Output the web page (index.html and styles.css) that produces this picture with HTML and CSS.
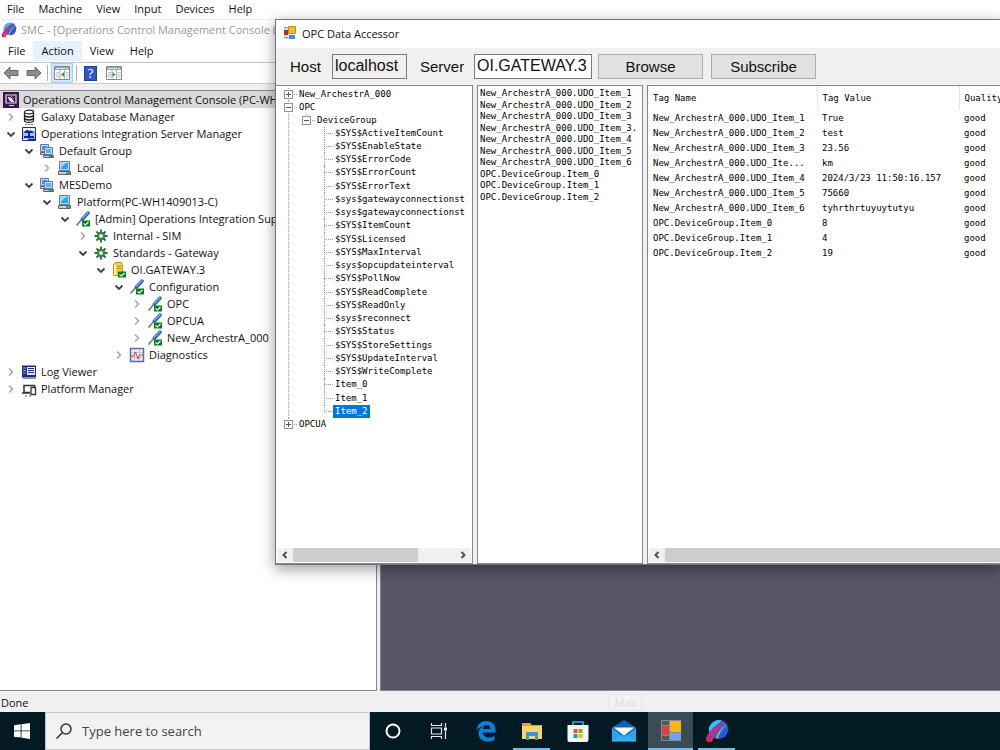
FILE: index.html
```
<!DOCTYPE html>
<html lang="en">
<head>
  <meta charset="UTF-8" />
  <meta name="viewport" content="width=device-width, initial-scale=1.0"/>
  <title>OPC Data Accessor</title>
  <link rel="stylesheet" href="styles.css">
</head>
<body>

<!-- shared icons -->
<svg class="sprite" aria-hidden="true">
  <symbol id="i-open" viewBox="0 0 16 16"><path d="M4.500 6.500 8 10l3.500-3.500" fill="none" stroke="#404040" stroke-width="1.800"/></symbol>
  <symbol id="i-closed" viewBox="0 0 16 16"><path d="M6 4.500 9.500 8 6 11.500" fill="none" stroke="#a6a6a6" stroke-width="1.500"/></symbol>
  <symbol id="i-logo" viewBox="0 0 24 24">
    <circle cx="13.500" cy="10.500" r="9.500" fill="#1f6fe0"/>
    <path d="M7 4.500a9 9 0 0 1 10-3C12 5 8 10 6 17c-3-4-3-9 1-12.500z" fill="#35c3f3"/>
    <path d="M22 2C14 5 8 11 4 22l3 1C10 14 14 7 22 2z" fill="#e32b4b"/>
    <path d="M21 1C12 4 5 10 1 19l3 3C7 12 13 5 21 1z" fill="#b42bb0"/>
    <path d="M1 18l5 5H2q-1-2-1-5z" fill="#e32b2b"/>
    <path d="M23 4c-6 4-10 9-12 16l1.500-1C14.500 13 18 8 23 4z" fill="#ffb05e"/>
    <path d="M22.500 8c-4 3-7 6-9 11.500 6-.5 10-6 9-11.500z" fill="#2a54dd"/>
  </symbol>
  <symbol id="i-console" viewBox="0 0 16 16">
    <path d="M0 0h16v16H0z" fill="#3a1450"/>
    <path d="M3 3h10v8H3zM6 13.500h5" fill="none" stroke="#e6d9ee" stroke-width="1.200"/>
    <path d="M5 5l3 1 3 4-4-1zM8 4l3 3" fill="#fff" stroke="#fff" stroke-width=".6"/>
  </symbol>
  <symbol id="i-db" viewBox="0 0 16 16">
    <path d="M3.500 3v8.500c0 2.500 9 2.500 9 0V3" fill="#fff" stroke="#222" stroke-width="1.200"/>
    <ellipse cx="8" cy="3" rx="4.500" ry="1.800" fill="#fff" stroke="#222" stroke-width="1.200"/>
    <path d="M3.500 6c0 2.500 9 2.500 9 0M3.500 9c0 2.500 9 2.500 9 0" fill="none" stroke="#222" stroke-width="1.500"/>
    <path d="M4 15.500h2M7 15.500h2M10 15.500h2" stroke="#777"/>
  </symbol>
  <symbol id="i-server" viewBox="0 0 16 16">
    <path d="M1.500 1.500h13v13h-13z" fill="#a9c1ee" stroke="#1b2a7c"/>
    <path d="M2 2h12v3H2z" fill="#e9f0ff"/>
    <path d="M3 7c1-3 4-4 5-2 2-1 4 0 5 2zM7 7h2v3H7zM3 10h10v2H3z" fill="#122a86"/>
    <path d="M2 13.500h5" stroke="#fff"/>
    <path d="M7 13.500h7" stroke="#122a86" stroke-width="1.500"/>
  </symbol>
  <symbol id="i-pc" viewBox="0 0 16 16">
    <path d="M2.500 1.500h10v9h-10z" fill="#cdd5e4" stroke="#6c7899"/>
    <path d="M4 3h7v6H4z" fill="#27a4ee"/>
    <path d="M4 3h5L4 8z" fill="#8adcff"/>
    <path d="M1.500 11.500h12v3h-12z" fill="#c9ced8" stroke="#5c6478"/>
    <path d="M9 13h4" stroke="#22a035" stroke-width="1.500"/>
  </symbol>
  <symbol id="i-group" viewBox="0 0 16 16">
    <path d="M1.500 1.500h8v7h-8z" fill="#cdd5e4" stroke="#6c7899"/>
    <path d="M3 3h5v4H3z" fill="#27a4ee"/>
    <path d="M1.500 9.500h5v2h-5z" fill="#c9ced8" stroke="#5c6478"/>
    <path d="M5.500 4.500h8v7h-8z" fill="#cdd5e4" stroke="#6c7899"/>
    <path d="M7 6h5v4H7z" fill="#43b9f5"/>
    <path d="M4.500 12.500h10v2h-10z" fill="#c9ced8" stroke="#5c6478"/>
    <path d="M10 13.500h4" stroke="#22a035" stroke-width="1.500"/>
  </symbol>
  <symbol id="i-pen" viewBox="0 0 16 16">
    <path d="M1.500 14.500 8 7" stroke="#7a7a7a" stroke-width="1.800"/>
    <path d="M7.500 8 13 2" stroke="#2a5fae" stroke-width="3.400" stroke-linecap="round"/>
    <path d="M7.500 7 12.500 1.800" stroke="#6aa6ec" stroke-width="1.800" stroke-linecap="round"/>
    <path d="M7 9.500h8v6H7z" fill="#0c7a1d"/>
    <path d="m8.500 12.500 2 1.500 3-3.200" fill="none" stroke="#fff" stroke-width="1.200"/>
  </symbol>
  <symbol id="i-gear" viewBox="0 0 16 16">
    <path d="M8 1.500v13M1.500 8h13M3.500 3.500l9 9M12.500 3.500l-9 9" stroke="#2c6633" stroke-width="1.800"/>
    <circle cx="8" cy="8" r="4.200" fill="#3d7f42"/>
    <circle cx="8" cy="8" r="2" fill="#dff0df"/>
  </symbol>
  <symbol id="i-gateway" viewBox="0 0 16 16">
    <path d="m2.500 2.500 2-2h6l1 2v11h-9z" fill="#f0cf48" stroke="#b8942a"/>
    <path d="M3 3h2v10H3z" fill="#fff3a8"/>
    <path d="M6 4.500h4M6 6.500h4" stroke="#b8901c"/>
    <path d="M7 9.500h8v6H7z" fill="#0c7a1d"/>
    <path d="m8.500 12.500 2 1.500 3-3.200" fill="none" stroke="#fff" stroke-width="1.200"/>
  </symbol>
  <symbol id="i-diag" viewBox="0 0 16 16">
    <path d="M1.500 1.500h13v13h-13z" fill="#e8edf8" stroke="#5c6aa0" stroke-width="1.500"/>
    <path d="M5.500 2v12M10.500 2v12M2 5.500h12M2 10.500h12" stroke="#b9c5e2"/>
    <path d="M2 9h3l1.500-4 2.500 7 1.500-4H14" fill="none" stroke="#e23b3b"/>
  </symbol>
  <symbol id="i-log" viewBox="0 0 16 16">
    <path d="M1 1.500h14v12H1z" fill="#1c2b86"/>
    <path d="M6 3h8v8H6z" fill="#e6ecff"/>
    <path d="M7 4.500h6M7 6.500h6M7 8.500h6" stroke="#1c2b86"/>
    <path d="M2 4h3M2 6.500h3M2 9h3" stroke="#9db4f2"/>
    <path d="M2 14.500h13" stroke="#8a93b8"/>
  </symbol>
  <symbol id="i-devices" viewBox="0 0 16 16">
    <path d="M9 11.500H3v-7h10.500v2M1 12h8" fill="none" stroke="#333" stroke-width="1.500"/>
    <path d="M10 6.500h4.500v7H10z" fill="#fff" stroke="#333" stroke-width="1.300"/>
    <path d="M4 15h2M8 15h2" stroke="#555"/>
  </symbol>
  <symbol id="i-form" viewBox="0 0 16 16">
    <path d="M2 2h5v12H2z" fill="#dcdcdc"/>
    <path d="M2 5h4v5H2z" fill="#c22a20"/>
    <path d="M6.500 1.500h7v7h-7z" fill="#f3bd27" stroke="#c78d10"/>
    <path d="M7 10h6v4H7z" fill="#4d86e8"/>
    <path d="M2 2.500h4M2 12.500h4" stroke="#999"/>
  </symbol>
  <symbol id="i-back" viewBox="0 0 16 14"><path d="m1 7 6-6v3.500h8v5H7V13z" fill="#8d8d8d" stroke="#6a6a6a"/></symbol>
  <symbol id="i-panel" viewBox="0 0 16 14">
    <path d="M.5.5h15v13H.5z" fill="#fff" stroke="#83898f"/>
    <path d="M1 1h14v3H1z" fill="#9aa1a8"/>
    <path d="M2 2.500h9M12 2.500h2" stroke="#e4e7ea"/>
    <path d="M6 4v9M10.500 4v9" stroke="#a7adb3"/>
    <path d="M2 6.500h3M2 8.500h3M2 10.500h3M11.500 6.500h3M11.500 8.500h3M11.500 10.500h3" stroke="#c0c4c8"/>
  </symbol>
</svg>

<nav class="menubar vm-menu">
  <button>File</button><button>Machine</button><button>View</button><button>Input</button><button>Devices</button><button>Help</button>
</nav>

<div class="desktop">
  <header class="smc-title">
    <svg class="icon"><use href="#i-logo"/></svg>
    <span>SMC - [Operations Control Management Console (</span>
  </header>
  <nav class="menubar smc-menu">
    <button>File</button><button class="active">Action</button><button>View</button><button>Help</button>
  </nav>

  <div class="toolbar">
    <button aria-label="Back"><svg><use href="#i-back"/></svg></button>
    <button aria-label="Forward"><svg class="flip"><use href="#i-back"/></svg></button>
    <i class="sep"></i>
    <button class="on" aria-label="Show console tree"><svg viewBox="0 0 16 14"><use href="#i-panel"/><path d="M10 6v5L7 8.500z" fill="#33a02c"/></svg></button>
    <i class="sep"></i>
    <button class="help" aria-label="Help">?</button>
    <button aria-label="Show action pane"><svg viewBox="0 0 16 14"><use href="#i-panel"/><path d="M6.500 6v5l3-2.500z" fill="#33a02c"/></svg></button>
  </div>

  <main class="workspace">
    <div class="console-tree">
      <div class="row root"><svg class="icon"><use href="#i-console"/></svg>Operations Control Management Console (PC-WH</div>
      <ul>
        <li><div class="row"><svg><use href="#i-closed"/></svg><svg><use href="#i-db"/></svg>Galaxy Database Manager</div></li>
        <li><div class="row"><svg><use href="#i-open"/></svg><svg><use href="#i-server"/></svg>Operations Integration Server Manager</div>
          <ul>
            <li><div class="row"><svg><use href="#i-open"/></svg><svg><use href="#i-group"/></svg>Default Group</div>
              <ul>
                <li><div class="row"><svg><use href="#i-closed"/></svg><svg><use href="#i-pc"/></svg>Local</div></li>
              </ul>
            </li>
            <li><div class="row"><svg><use href="#i-open"/></svg><svg><use href="#i-group"/></svg>MESDemo</div>
              <ul>
                <li><div class="row"><svg><use href="#i-open"/></svg><svg><use href="#i-pc"/></svg>Platform(PC-WH1409013-C)</div>
                  <ul>
                    <li><div class="row"><svg><use href="#i-open"/></svg><svg><use href="#i-pen"/></svg>[Admin] Operations Integration Sup</div>
                      <ul>
                        <li><div class="row"><svg><use href="#i-closed"/></svg><svg><use href="#i-gear"/></svg>Internal - SIM</div></li>
                        <li><div class="row"><svg><use href="#i-open"/></svg><svg><use href="#i-gear"/></svg>Standards - Gateway</div>
                          <ul>
                            <li><div class="row"><svg><use href="#i-open"/></svg><svg><use href="#i-gateway"/></svg>OI.GATEWAY.3</div>
                              <ul>
                                <li><div class="row"><svg><use href="#i-open"/></svg><svg><use href="#i-pen"/></svg>Configuration</div>
                                  <ul>
                                    <li><div class="row"><svg><use href="#i-closed"/></svg><svg><use href="#i-pen"/></svg>OPC</div></li>
                                    <li><div class="row"><svg><use href="#i-closed"/></svg><svg><use href="#i-pen"/></svg>OPCUA</div></li>
                                    <li><div class="row"><svg><use href="#i-closed"/></svg><svg><use href="#i-pen"/></svg>New_ArchestrA_000</div></li>
                                  </ul>
                                </li>
                                <li><div class="row"><svg><use href="#i-closed"/></svg><svg><use href="#i-diag"/></svg>Diagnostics</div></li>
                              </ul>
                            </li>
                          </ul>
                        </li>
                      </ul>
                    </li>
                  </ul>
                </li>
              </ul>
            </li>
          </ul>
        </li>
        <li><div class="row"><svg><use href="#i-closed"/></svg><svg><use href="#i-log"/></svg>Log Viewer</div></li>
        <li><div class="row"><svg><use href="#i-closed"/></svg><svg><use href="#i-devices"/></svg>Platform Manager</div></li>
      </ul>
    </div>
    <div class="detail-pane"></div>
  </main>

  <footer class="statusbar">Done<span class="tip">Mail</span></footer>
</div>

<section class="opc-window">
  <header class="opc-title"><svg class="icon"><use href="#i-form"/></svg>OPC Data Accessor</header>
  <form class="opc-bar">
    <label for="host">Host</label>
    <input id="host" class="readonly" type="text" value="localhost" readonly>
    <label for="server">Server</label>
    <input id="server" class="server" type="text" value="OI.GATEWAY.3">
    <button type="button">Browse</button>
    <button type="button">Subscribe</button>
  </form>
  <div class="panes">
    <div class="pane">
      <ul class="tag-tree">
        <li><div><i class="box plus"></i><span>New_ArchestrA_000</span></div></li>
        <li><div><i class="box"></i><span>OPC</span></div>
          <ul>
            <li><div><i class="box"></i><span>DeviceGroup</span></div>
              <ul class="leaves">
                <li><div><span>$SYS$ActiveItemCount</span></div></li>
                <li><div><span>$SYS$EnableState</span></div></li>
                <li><div><span>$SYS$ErrorCode</span></div></li>
                <li><div><span>$SYS$ErrorCount</span></div></li>
                <li><div><span>$SYS$ErrorText</span></div></li>
                <li><div><span>$sys$gatewayconnectionst</span></div></li>
                <li><div><span>$sys$gatewayconnectionst</span></div></li>
                <li><div><span>$SYS$ItemCount</span></div></li>
                <li><div><span>$SYS$Licensed</span></div></li>
                <li><div><span>$SYS$MaxInterval</span></div></li>
                <li><div><span>$sys$opcupdateinterval</span></div></li>
                <li><div><span>$SYS$PollNow</span></div></li>
                <li><div><span>$SYS$ReadComplete</span></div></li>
                <li><div><span>$SYS$ReadOnly</span></div></li>
                <li><div><span>$sys$reconnect</span></div></li>
                <li><div><span>$SYS$Status</span></div></li>
                <li><div><span>$SYS$StoreSettings</span></div></li>
                <li><div><span>$SYS$UpdateInterval</span></div></li>
                <li><div><span>$SYS$WriteComplete</span></div></li>
                <li><div><span>Item_0</span></div></li>
                <li><div><span>Item_1</span></div></li>
                <li><div><span class="selected">Item_2</span></div></li>
              </ul>
            </li>
          </ul>
        </li>
        <li><div><i class="box plus"></i><span>OPCUA</span></div></li>
      </ul>
      <div class="scrollbar">
        <button aria-label="Scroll left"><svg viewBox="0 0 8 8"><path d="M5.500 1 2.500 4l3 3" /></svg></button>
        <i class="thumb"></i>
        <button aria-label="Scroll right"><svg viewBox="0 0 8 8"><path d="m2.500 1 3 3-3 3" /></svg></button>
      </div>
    </div>

    <div class="pane">
      <ul class="tag-list">
        <li>New_ArchestrA_000.UDO_Item_1</li>
        <li>New_ArchestrA_000.UDO_Item_2</li>
        <li>New_ArchestrA_000.UDO_Item_3</li>
        <li>New_ArchestrA_000.UDO_Item_3.</li>
        <li>New_ArchestrA_000.UDO_Item_4</li>
        <li>New_ArchestrA_000.UDO_Item_5</li>
        <li>New_ArchestrA_000.UDO_Item_6</li>
        <li>OPC.DeviceGroup.Item_0</li>
        <li>OPC.DeviceGroup.Item_1</li>
        <li>OPC.DeviceGroup.Item_2</li>
      </ul>
    </div>

    <div class="pane">
      <table class="values">
        <thead>
          <tr><th class="c-name">Tag Name</th><th class="c-value">Tag Value</th><th>Quality</th></tr>
        </thead>
        <tbody>
          <tr><td>New_ArchestrA_000.UDO_Item_1</td><td>True</td><td>good</td></tr>
          <tr><td>New_ArchestrA_000.UDO_Item_2</td><td>test</td><td>good</td></tr>
          <tr><td>New_ArchestrA_000.UDO_Item_3</td><td>23.56</td><td>good</td></tr>
          <tr><td>New_ArchestrA_000.UDO_Ite...</td><td>km</td><td>good</td></tr>
          <tr><td>New_ArchestrA_000.UDO_Item_4</td><td>2024/3/23 11:50:16.157</td><td>good</td></tr>
          <tr><td>New_ArchestrA_000.UDO_Item_5</td><td>75660</td><td>good</td></tr>
          <tr><td>New_ArchestrA_000.UDO_Item_6</td><td>tyhrthrtuyuytutyu</td><td>good</td></tr>
          <tr><td>OPC.DeviceGroup.Item_0</td><td>8</td><td>good</td></tr>
          <tr><td>OPC.DeviceGroup.Item_1</td><td>4</td><td>good</td></tr>
          <tr><td>OPC.DeviceGroup.Item_2</td><td>19</td><td>good</td></tr>
        </tbody>
      </table>
      <div class="scrollbar">
        <button aria-label="Scroll left"><svg viewBox="0 0 8 8"><path d="M5.500 1 2.500 4l3 3" /></svg></button>
        <i class="thumb wide"></i>
      </div>
    </div>
  </div>
</section>

<footer class="taskbar">
  <button class="start" aria-label="Start">
    <svg viewBox="0 0 16 16"><path d="M0 2.200 6.700 1.300v6.200H0zM7.500 1.200 16 0v7.500H7.500zM0 8.300h6.700v6.300L0 13.700zM7.500 8.300H16V16l-8.500-1.200z" fill="#fff"/></svg>
  </button>
  <label class="search">
    <svg viewBox="0 0 16 16"><circle cx="10" cy="6" r="5" /><path d="M6.500 9.500.5 15.500"/></svg>
    <input type="text" placeholder="Type here to search">
  </label>
  <div class="apps">
    <button aria-label="Cortana"><svg viewBox="0 0 24 24"><circle cx="12" cy="12" r="6.500" fill="none" stroke="#fff" stroke-width="2"/></svg></button>
    <button aria-label="Task View"><svg viewBox="0 0 24 24"><path d="M4.500 4v2.500h10V4M4.500 20v-2.500h10V20M4.500 9h10v6h-10zM18.500 4v4M18.500 12v8" fill="none" stroke="#e8eaeb" stroke-width="1.200"/><path d="M17 8.500h3v3h-3z" fill="#fff"/></svg></button>
  </div>
  <div class="apps">
    <button aria-label="Edge"><svg viewBox="0 0 24 24"><path d="M2.500 11C3.500 5 7.500 2 12.500 2c6 0 9 4.500 9 9v2.500H8.500c.3 3.500 3.500 5 6.500 5 2.200 0 4.200-.6 5.500-1.500v4c-2 1-4.200 1.500-6.500 1.500-5.500 0-9.500-3-9.500-8.300 0-3.200 2-5.700 4.500-7-2.500.6-4.800 2-6.500 3.800zM8.700 10h7.600c0-2.500-1.200-3.900-3.500-3.900-2.200 0-3.700 1.500-4.100 3.900z" fill="#0b7fdb"/></svg></button>
    <button class="running" aria-label="File Explorer"><svg viewBox="0 0 24 24"><path d="M2 4h8l2 2h10v14H2z" fill="#e5a61b"/><path d="M2 7h20v13H2z" fill="#fbd667"/><path d="M6 21v-8h12v8h-3v-4H9v4z" fill="#3f92d6"/></svg></button>
    <button aria-label="Microsoft Store"><svg viewBox="0 0 24 24"><path d="M7 7V3h10v4" fill="none" stroke="#24b3ea" stroke-width="1.600"/><path d="M1.500 6h21v15q0 2-2 2h-17q-2 0-2-2z" fill="#f5f5f5"/><path d="M7.500 10H11.500v4h-4z" fill="#f05022"/><path d="M12.500 10h4v4h-4z" fill="#7cb902"/><path d="M7.500 15h4v4h-4z" fill="#00a3ee"/><path d="M12.500 15h4v4h-4z" fill="#ffb802"/></svg></button>
    <button aria-label="Mail"><svg viewBox="0 0 24 24"><path d="M0 8.500 12 1l12 7.500V22H0z" fill="#0d63b5"/><path d="m0 9 12 9 12-9v13.500H0z" fill="#27a6ec"/><path d="m0 22.500 12-8 12 8z" fill="#3fc0f6" opacity=".5"/><path d="M1.500 8.500h21L12 16.500z" fill="#f7fafc"/></svg></button>
  </div>
  <div class="apps">
    <button class="running current" aria-label="OPC Data Accessor"><svg viewBox="0 0 24 24"><path d="M2 1h20v21H2z" fill="#86898c"/><path d="M3 2h7v4H3zM3 17h7v4H3z" fill="#4e5a60"/><path d="M3 7h7v9H3z" fill="#d8433b"/><path d="M11 2h11v11H11z" fill="#f2b81d"/><path d="M11 14h11v7H11z" fill="#6fa2f3"/></svg></button>
    <button class="running" aria-label="SMC"><svg viewBox="0 0 24 24"><use href="#i-logo"/></svg></button>
  </div>
</footer>

</body>
</html>
```
FILE: styles.css
```
* {
  box-sizing: border-box;
}

body {
  font-family: "Open Sans", "Noto Sans", sans-serif;
  margin: 0;
  height: 100vh;
  display: flex;
  flex-direction: column;
  position: relative;
  background: #f0f0f0;
  color: #111;
  font-size: 11px;
  overflow: hidden;
}

button, input {
  font: inherit;
  color: inherit;
  border: none;
  border-radius: 0;
  background: none;
  padding: 0;
  margin: 0;
}

ul {
  list-style: none;
  margin: 0;
  padding: 0;
}

svg {
  display: block;
  width: 16px;
  height: 16px;
  flex: none;
}

.sprite {
  position: absolute;
  width: 0;
  height: 0;
}

.menubar {
  display: flex;
  flex: none;
  background: #fff;
}

.menubar button {
  padding: 0 8px 1px;
}

.vm-menu {
  height: 19px;
}

.vm-menu button {
  padding: 0 7px 2px;
}

.desktop {
  flex: 1;
  min-height: 0;
  display: flex;
  flex-direction: column;
}

.smc-title {
  display: flex;
  align-items: center;
  gap: 4px;
  flex: none;
  height: 22px;
  padding: 0 0 2px 1px;
  background: #fff;
  border-top: 1px solid #f0f0f0;
  color: #999;
  white-space: nowrap;
}

.smc-menu {
  height: 21px;
  padding-bottom: 1px;
}

.smc-menu .active {
  background: #e5f1fb;
}

.toolbar {
  display: flex;
  align-items: center;
  flex: none;
  gap: 3px;
  height: 22px;
  padding-left: 1px;
  background: #fff;
  border-top: 1px solid #c4c4c4;
  border-bottom: 1px solid #d0d0d0;
}

.toolbar button {
  width: 20px;
  height: 20px;
  display: grid;
  place-items: center;
}

.toolbar svg {
  height: 14px;
}

.toolbar .flip {
  transform: scaleX(-1);
}

.toolbar .sep {
  width: 1px;
  height: 16px;
  background: #b0b0b0;
}

.toolbar .on {
  width: 22px;
  background: #cce8ff;
  border: 1px solid #99d1ff;
}

.toolbar .help {
  width: 13px;
  height: 15px;
  margin: 0 4px;
  background: #3359c0;
  border: 1px solid #24409a;
  color: #fff;
  font-size: 13px;
  line-height: 13px;
}

.workspace {
  flex: 1;
  min-height: 0;
  display: flex;
  gap: 3px;
  padding: 6px 0 1px;
}

.console-tree {
  flex: 0 0 377px;
  background: #fff;
  border: 1px solid #828790;
  border-left: none;
  overflow: hidden;
  white-space: nowrap;
}

.console-tree .row {
  display: flex;
  align-items: center;
  height: 17px;
  gap: 2px;
  padding-left: 3px;
}

.console-tree svg + svg {
  margin-right: 2px;
}

.console-tree .root {
  gap: 4px;
  background: #d9d9d9;
}

.console-tree ul ul {
  padding-left: 18px;
}

.detail-pane {
  flex: 1;
  background: #585666;
  border: 1px solid #828790;
  border-right: none;
}

.statusbar {
  display: flex;
  align-items: center;
  flex: none;
  height: 20px;
  padding-left: 1px;
}

.statusbar .tip {
  margin-left: 580px;
  padding: 0 5px;
  border: 1px solid #e4e4e4;
  background: #f2f2f2;
  color: #dcdcdc;
}

/* floating window */
.opc-window {
  position: absolute;
  left: 275px;
  right: 0;
  top: 19px;
  bottom: 185px;
  display: flex;
  flex-direction: column;
  background: #f0f0f0;
  border: 1px solid #70757a;
  border-right: none;
  box-shadow: 0 4px 14px rgba(0,0,0,0.4);
}

.opc-title {
  display: flex;
  align-items: center;
  gap: 4px;
  flex: none;
  height: 28px;
  padding: 0 0 2px 6px;
  background: #fff;
}

.opc-bar {
  display: flex;
  align-items: center;
  gap: 8px;
  flex: none;
  height: 37px;
  padding: 0 14px 1px;
  font-family: "Liberation Sans", Arial, sans-serif;
  font-size: 15px;
}

.opc-bar label {
  width: 34px;
}

.opc-bar input {
  width: 75px;
  height: 25px;
  padding: 0 2px;
  font-size: 16px;
  background: #fff;
  border: 1px solid #7a7a7a;
}

.opc-bar .readonly {
  background: #f0f0f0;
}

.opc-bar .readonly + label {
  width: 46px;
  margin-left: 5px;
}

.opc-bar .server {
  width: 118px;
  margin-right: -2px;
}

.opc-bar button {
  width: 105px;
  height: 25px;
  background: #e1e1e1;
  border: 1px solid #adadad;
}

.panes {
  flex: 1;
  min-height: 0;
  display: grid;
  grid-template-columns: 197px 166px 1fr;
  gap: 4px;
  font-family: "DejaVu Sans Mono", "Liberation Mono", monospace;
  font-size: 9px;
  color: #000;
}

.pane {
  display: flex;
  flex-direction: column;
  justify-content: space-between;
  min-width: 0;
  background: #fff;
  border: 1px solid #828790;
  overflow: hidden;
  white-space: nowrap;
}

.pane:first-child {
  border-left: none;
}

.pane:last-child {
  border-right: none;
}

.tag-tree {
  padding: 2px 0 0 8px;
}

.tag-tree ul {
  padding-left: 18px;
}

.tag-tree li {
  position: relative;
}

.tag-tree li div {
  display: flex;
  align-items: center;
  height: 13px;
}

.tag-tree .leaves li:nth-child(4n) {
  padding-bottom: 1px;
}

/* dotted connector lines */
.tag-tree li::before {
  content: "";
  position: absolute;
  left: 4px;
  top: 0;
  bottom: 0;
  border-left: 1px dotted #999;
}

.tag-tree li:last-child::before {
  bottom: auto;
  height: 7px;
}

.tag-tree li div::before {
  content: "";
  width: 9px;
  margin-left: 4px;
  border-top: 1px dotted #999;
}

.tag-tree .box {
  position: absolute;
  left: 0;
  width: 9px;
  height: 9px;
  border: 1px solid #919191;
  background: linear-gradient(#3c5a9a, #3c5a9a) center / 5px 1px no-repeat #fff;
}

.tag-tree .plus {
  background: linear-gradient(#3c5a9a, #3c5a9a) center / 5px 1px no-repeat, linear-gradient(#3c5a9a, #3c5a9a) center / 1px 5px no-repeat #fff;
}

.tag-tree span {
  padding: 0 2px;
  line-height: 13px;
}

.tag-tree .selected {
  background: #0078d7;
  color: #fff;
}

.tag-list {
  padding: 2px;
}

.tag-list li {
  line-height: 11px;
}

.tag-list li:nth-child(2n) {
  line-height: 12px;
}

.values {
  width: 100%;
  border-collapse: collapse;
  table-layout: fixed;
}

.values th {
  height: 24px;
  padding: 0 5px;
  font-weight: normal;
  text-align: left;
  border-right: 1px solid #e5e5e5;
}

.values th:last-child {
  padding-right: 0;
  border-right: none;
}

.values td {
  height: 15px;
  padding: 0 5px;
}

.c-name {
  width: 169px;
}

.c-value {
  width: 142px;
}

.scrollbar {
  display: flex;
  margin: 0 1px 1px;
  height: 14px;
  background: #f0f0f0;
}

.pane:last-child .scrollbar {
  margin-right: 0;
}

.scrollbar button {
  width: 16px;
  display: grid;
  place-items: center;
}

.scrollbar button:last-child {
  margin-left: auto;
}

.scrollbar svg {
  width: 8px;
  height: 8px;
  fill: none;
  stroke: #505050;
  stroke-width: 2;
}

.scrollbar .thumb {
  width: 125px;
  background: #cdcdcd;
}

.scrollbar .wide {
  flex: 1;
}

/* windows taskbar */
.taskbar {
  display: flex;
  gap: 2px;
  flex: none;
  height: 38px;
  background: #031a24;
}

.start {
  width: 43px;
  display: grid;
  place-items: center;
}

.search {
  display: flex;
  align-items: center;
  gap: 10px;
  width: 325px;
  padding-left: 10px;
  background: #f2f2f2;
  border: 1px solid #c4c4c4;
  margin-right: -2px;
}

.search svg {
  fill: none;
  stroke: #333;
  stroke-width: 1.5px;
}

.search input {
  flex: 1;
  min-width: 0;
  font-size: 13px;
}

.search input::placeholder {
  color: #444;
  opacity: 1;
}

.apps {
  display: flex;
  gap: 1px;
}

.apps button {
  position: relative;
  width: 45px;
  display: grid;
  place-items: center;
}

.apps svg {
  width: 24px;
  height: 24px;
}

.apps .current {
  background: #3a4d56;
}

.running::after {
  content: "";
  position: absolute;
  left: 4px;
  right: 4px;
  bottom: 0;
  height: 2px;
  background: #76b9ed;
}

.current::after {
  left: 0;
  right: 0;
}
```
